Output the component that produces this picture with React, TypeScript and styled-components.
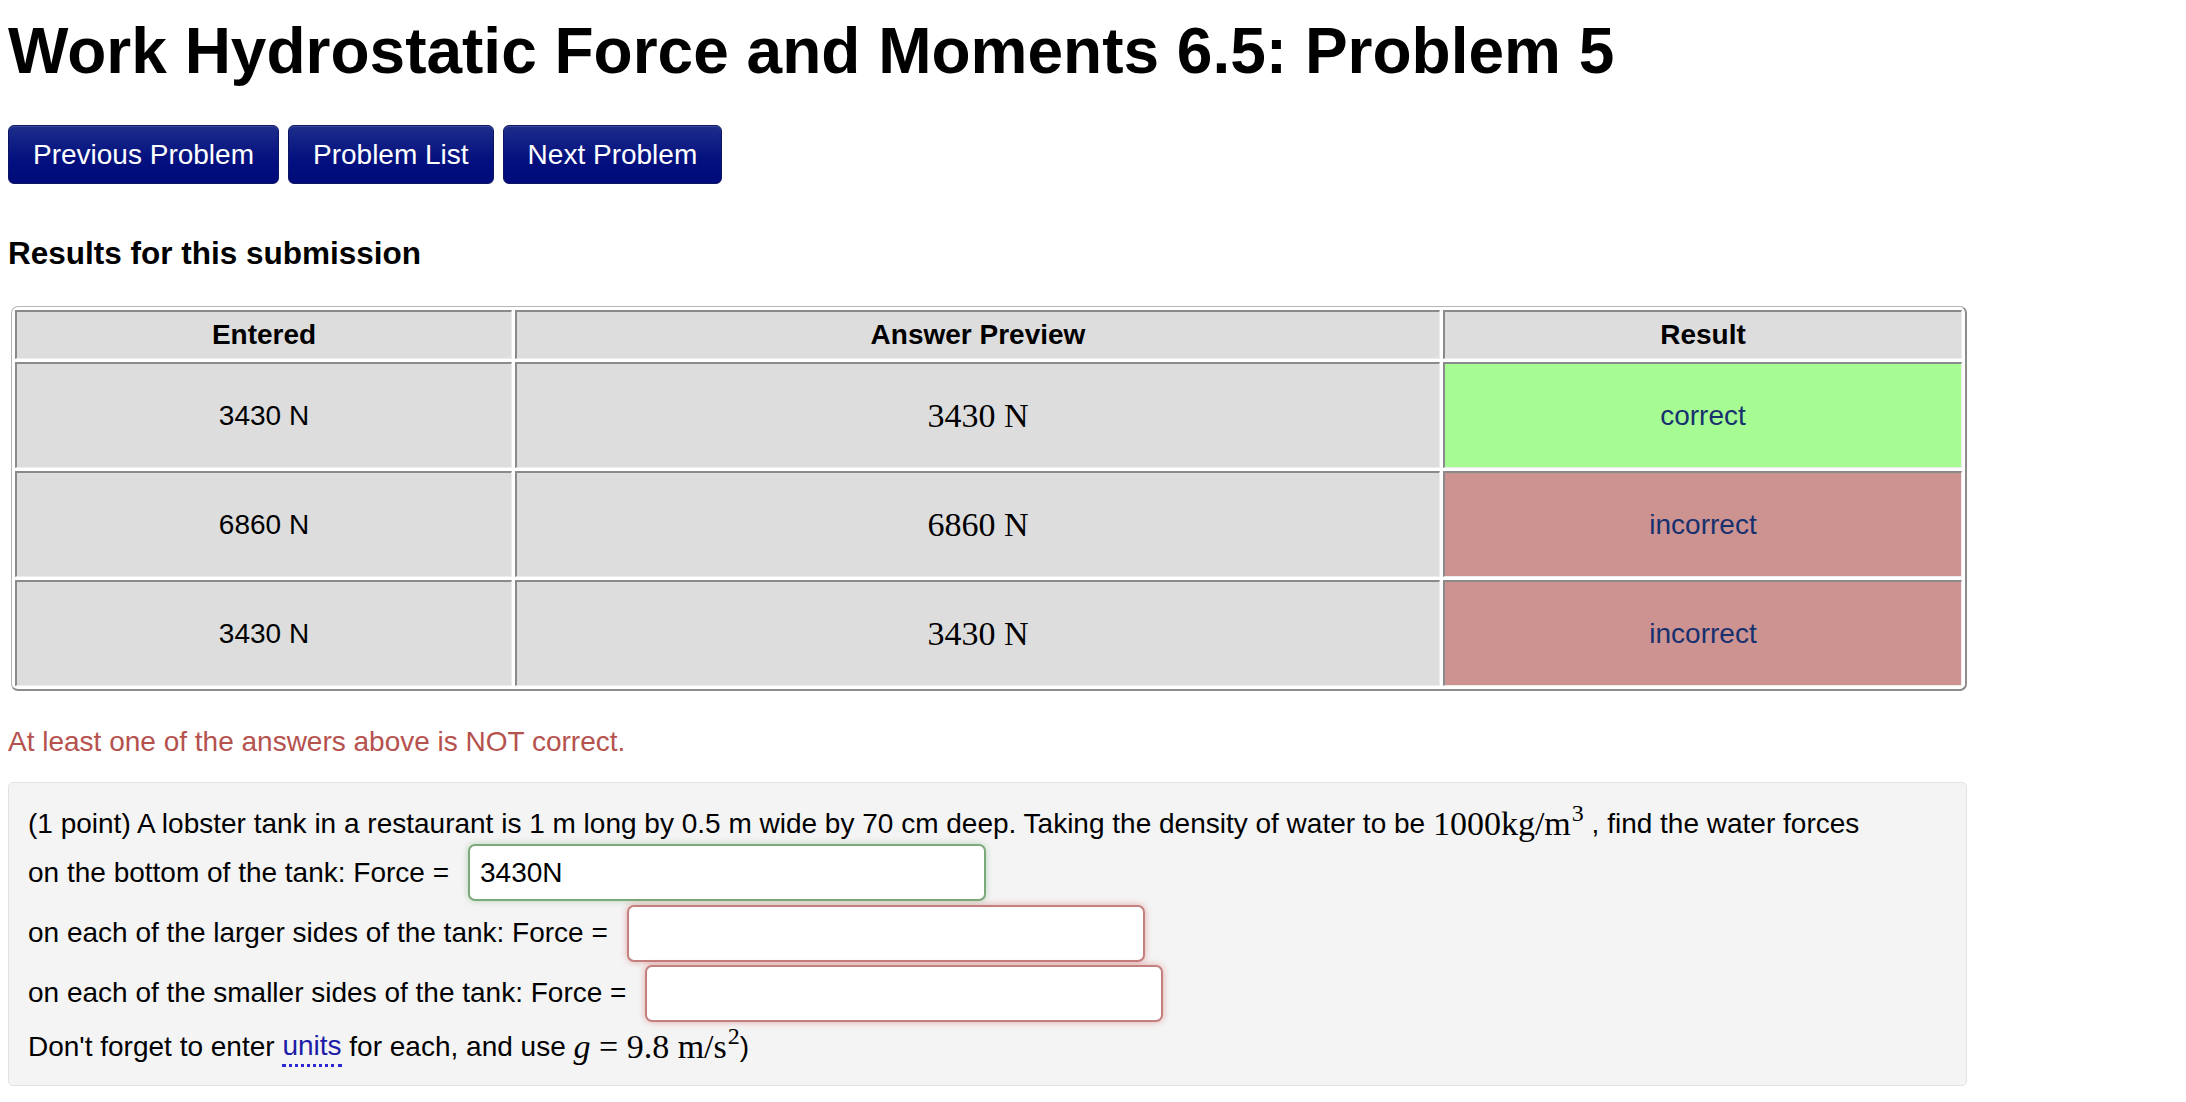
import React from "react";
import styled, { createGlobalStyle } from "styled-components";

const Global = createGlobalStyle`
  html, body { background: #ffffff; }
  body {
    margin: 8px;
    font-family: "Liberation Sans", Arial, Helvetica, sans-serif;
    font-size: 28px;
    color: #000;
  }
  * { box-sizing: border-box; }
`;

const Title = styled.h1`
  margin: 8px 0 39px;
  font-size: 64px;
  line-height: 70px;
  font-weight: 700;
  letter-spacing: 0;
`;

const NavBar = styled.div`
  display: flex;
  gap: 9px;
`;

const NavButton = styled.button`
  height: 59px;
  padding: 0 24px;
  font-family: "Liberation Sans", Arial, Helvetica, sans-serif;
  font-size: 28px;
  color: #ffffff;
  background: linear-gradient(#1d2d8a, #03107f 60%, #000a7a);
  border: 1px solid #0c1660;
  border-radius: 6px;
  box-shadow: inset 0 1px 0 rgba(255, 255, 255, 0.15);
  cursor: pointer;
`;

const SectionHead = styled.h3`
  margin: 51px 0 35px;
  font-size: 31.5px;
  line-height: 36px;
  font-weight: 700;
`;

const ResultsTable = styled.table`
  margin-left: 3px;
  width: 1956px;
  table-layout: fixed;
  border-collapse: separate;
  border-spacing: 3px;
  border: 1px solid #b5b5b5;
  border-right: 2px solid #8c8c8c;
  border-bottom: 2px solid #8c8c8c;
  border-radius: 7px;
`;

const HeadCell = styled.th<{ $w?: number }>`
  width: ${(p) => (p.$w ? `${p.$w}px` : "auto")};
  background: #dddddd;
  border-top: 2px solid #8a8a8a;
  border-left: 2px solid #8a8a8a;
  border-right: 1px solid #ececec;
  border-bottom: 1px solid #ececec;
  padding: 6px 4px;
  font-size: 28px;
  line-height: 34px;
  font-weight: 700;
  text-align: center;
`;

const Cell = styled.td<{ $state?: "correct" | "incorrect"; $math?: boolean }>`
  background: ${(p) =>
    p.$state === "correct" ? "#a6fb93" : p.$state === "incorrect" ? "#cc9391" : "#dddddd"};
  color: ${(p) => (p.$state ? "#17306e" : "#000")};
  border-top: 2px solid #8a8a8a;
  border-left: 2px solid #8a8a8a;
  border-right: 1px solid #ececec;
  border-bottom: 1px solid #ececec;
  padding: 34px 4px;
  height: 106px;
  font-family: ${(p) =>
    p.$math ? '"Liberation Serif", "Times New Roman", serif' : '"Liberation Sans", Arial, sans-serif'};
  font-size: ${(p) => (p.$math ? "34px" : "28px")};
  line-height: 34px;
  text-align: center;
  vertical-align: middle;
`;

const Warning = styled.div`
  margin: 35px 0 24px;
  color: #b5524e;
  font-size: 28px;
  line-height: 32px;
`;

const ProblemBox = styled.div`
  width: 1959px;
  background: #f4f4f4;
  border: 1px solid #e2e2e2;
  border-radius: 5px;
  padding: 21px 19px 18px;
`;

const QLine = styled.div<{ $h?: number; $mt?: number }>`
  display: flex;
  align-items: center;
  height: ${(p) => p.$h ?? 40}px;
  margin-top: ${(p) => p.$mt ?? 0}px;
  white-space: pre;
  font-size: 28px;
`;

const AnswerInput = styled.input<{ $state: "correct" | "incorrect" }>`
  margin-left: 19px;
  width: 518px;
  height: 57px;
  padding: 0 10px;
  font-family: "Liberation Sans", Arial, sans-serif;
  font-size: 28px;
  color: #000;
  background: #fff;
  border-radius: 7px;
  border: 2px solid ${(p) => (p.$state === "correct" ? "#7aa97a" : "#c47f7f")};
  box-shadow: 0 0 7px
    ${(p) => (p.$state === "correct" ? "rgba(80, 150, 80, 0.35)" : "rgba(200, 60, 60, 0.4)")};
  outline: none;
`;

const Math = styled.span`
  font-family: "Liberation Serif", "Times New Roman", serif;
  font-size: 34px;
  white-space: pre;
`;

const Sup = styled.sup`
  font-size: 24px;
  position: relative;
  top: -14px;
  margin-left: 1px;
  vertical-align: baseline;
  line-height: 0;
`;

const Italic = styled.i`
  font-style: italic;
`;

const KnowlLink = styled.a`
  color: #1c1ca6;
  text-decoration: none;
  border-bottom: 3px dotted #2a2ad0;
  line-height: 36px;
`;

const rows = [
  { entered: "3430 N", preview: "3430 N", state: "correct" as const },
  { entered: "6860 N", preview: "6860 N", state: "incorrect" as const },
  { entered: "3430 N", preview: "3430 N", state: "incorrect" as const },
];

export default function App() {
  return (
    <>
      <Global />
      <Title>Work Hydrostatic Force and Moments 6.5: Problem 5</Title>
      <NavBar>
        <NavButton>Previous Problem</NavButton>
        <NavButton>Problem List</NavButton>
        <NavButton>Next Problem</NavButton>
      </NavBar>
      <SectionHead>Results for this submission</SectionHead>
      <ResultsTable>
        <thead>
          <tr>
            <HeadCell $w={497}>Entered</HeadCell>
            <HeadCell $w={925}>Answer Preview</HeadCell>
            <HeadCell>Result</HeadCell>
          </tr>
        </thead>
        <tbody>
          {rows.map((r, i) => (
            <tr key={i}>
              <Cell>{r.entered}</Cell>
              <Cell $math>{r.preview}</Cell>
              <Cell $state={r.state}>{r.state}</Cell>
            </tr>
          ))}
        </tbody>
      </ResultsTable>
      <Warning>At least one of the answers above is NOT correct.</Warning>
      <ProblemBox>
        <QLine>
          {"(1 point) A lobster tank in a restaurant is 1 m long by 0.5 m wide by 70 cm deep. Taking the density of water to be "}
          <Math>
            1000kg/m<Sup>3</Sup>
          </Math>
          {" , find the water forces"}
        </QLine>
        <QLine $h={57}>
          {"on the bottom of the tank: Force ="}
          <AnswerInput $state="correct" defaultValue="3430N" />
        </QLine>
        <QLine $h={58} $mt={3}>
          {"on each of the larger sides of the tank: Force ="}
          <AnswerInput $state="incorrect" defaultValue="" />
        </QLine>
        <QLine $h={58} $mt={2}>
          {"on each of the smaller sides of the tank: Force ="}
          <AnswerInput $state="incorrect" defaultValue="" />
        </QLine>
        <QLine $h={40} $mt={5}>
          {"Don't forget to enter "}
          <KnowlLink href="#">units</KnowlLink>
          {" for each, and use "}
          <Math>
            <Italic>g</Italic>
            {" = 9.8 m/s"}
            <Sup>2</Sup>
          </Math>
          {")"}
        </QLine>
      </ProblemBox>
    </>
  );
}
